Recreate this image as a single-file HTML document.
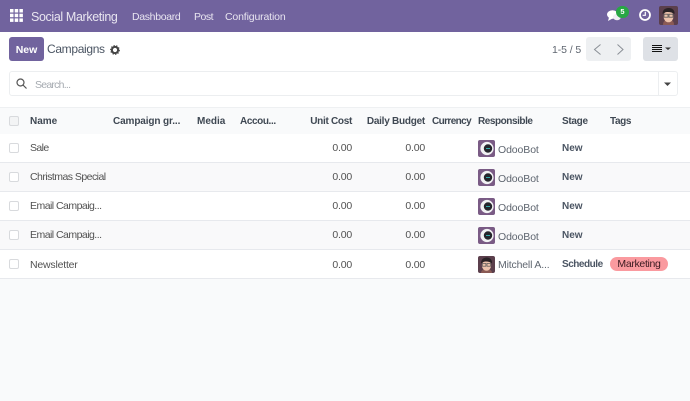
<!DOCTYPE html>
<html><head><meta charset="utf-8"><style>
html,body{margin:0;padding:0;background:#f9fafb}
body{width:690px;height:401px;overflow:hidden;position:relative;font-family:"Liberation Sans","Noto Sans CJK SC",sans-serif;font-size:10.5px;color:#525252}
#w{position:absolute;left:0;top:0;width:690px;height:401px;background:#f9fafb;overflow:hidden;filter:blur(.3px)}
.a{position:absolute;white-space:nowrap;line-height:14px}
.box{position:absolute;left:9px;width:10px;height:10px;box-sizing:border-box;border:1px solid #d8dadd;border-radius:2px;background:#fff}
.row{position:absolute;left:0;width:690px;height:28px;border-bottom:1px solid #e7e9ed;background:#fff}
.alt{background:#f9f9fa}
.h{font-weight:bold;color:#3f4853;font-size:10px}
.r{text-align:right}
.n{color:#e8e5f0}
.v{letter-spacing:-.2px}
.p{color:#5f6670;letter-spacing:-.1px}
.s{font-weight:bold;color:#4b5563;font-size:10px}
svg{position:absolute}
</style></head><body><div id="w">
<div class="a" style="left:0;top:0;width:690px;height:32px;background:#71639e"></div>
<svg style="left:10px;top:9px" width="13" height="13" fill="#fff"><rect x="0" y="0" width="3.5" height="3.5"/><rect x="4.7" y="0" width="3.5" height="3.5"/><rect x="9.4" y="0" width="3.5" height="3.5"/><rect x="0" y="4.7" width="3.5" height="3.5"/><rect x="4.7" y="4.7" width="3.5" height="3.5"/><rect x="9.4" y="4.7" width="3.5" height="3.5"/><rect x="0" y="9.4" width="3.5" height="3.5"/><rect x="4.7" y="9.4" width="3.5" height="3.5"/><rect x="9.4" y="9.4" width="3.5" height="3.5"/></svg>
<div class="a n" style="left:31px;top:10px;font-size:12.5px;letter-spacing:-.37px">Social Marketing</div>
<div class="a n" style="left:132px;top:10px;letter-spacing:-.33px">Dashboard</div>
<div class="a n" style="left:194px;top:10px;letter-spacing:-.5px">Post</div>
<div class="a n" style="left:225px;top:10px;letter-spacing:-.15px">Configuration</div>
<svg style="left:606px;top:9px" width="16" height="13"><ellipse cx="6.5" cy="5.5" rx="5.5" ry="4.3" fill="#fff"/><path d="M3 8.5L2 12L6.5 9.5Z" fill="#fff"/><ellipse cx="11" cy="8" rx="4" ry="3.2" fill="#f0eef5"/></svg>
<div class="a" style="left:616px;top:6px;width:13px;height:12px;border-radius:6.5px;background:#28a745;color:#fff;font-size:7.5px;font-weight:bold;line-height:12px;text-align:center">5</div>
<svg style="left:638px;top:8px" width="14" height="14"><circle cx="7" cy="7" r="5" fill="none" stroke="#fff" stroke-width="1.8"/><path d="M7.3 3.8V7.3H4.6" fill="none" stroke="#fff" stroke-width="1.2"/></svg>
<svg style="left:659px;top:6px" width="19" height="19"><rect width="19" height="19" rx="2" fill="#5b3f4c"/><path d="M4 19C4 15 6 14 9.5 14S15 15 15 19Z" fill="#8a5a55"/><ellipse cx="9.5" cy="10.5" rx="5" ry="5.8" fill="#edc3ac"/><path d="M3.5 8C3.5 3 7 2 10 2S16 4 15.5 8C13 6 8 5.5 6 6.5Z" fill="#2a2226"/><rect x="5" y="8.2" width="4" height="3" fill="none" stroke="#555" stroke-width=".8"/><rect x="10" y="8.2" width="4" height="3" fill="none" stroke="#555" stroke-width=".8"/></svg>

<div class="a" style="left:0;top:32px;width:690px;height:75px;background:#fff"></div>
<div class="a" style="left:9px;top:37px;width:35px;height:24px;border-radius:3px;background:#71639e;color:#fff;font-weight:bold;font-size:10.5px;line-height:27px;text-align:center">New</div>
<div class="a" style="left:47px;top:42px;font-size:12px;letter-spacing:-.33px;color:#4b5563">Campaigns</div>
<svg style="left:110px;top:45px" width="10" height="10"><circle cx="5" cy="5" r="3.1" fill="none" stroke="#444" stroke-width="2"/><circle cx="5" cy="5" r="4.2" fill="none" stroke="#444" stroke-width="1.4" stroke-dasharray="1.3 1.3"/></svg>
<div class="a" style="left:552px;top:43px;letter-spacing:-.1px;color:#5f6670">1-5 / 5</div>
<div class="a" style="left:586px;top:37px;width:22.5px;height:24px;background:#eef0f2;border-radius:3px 0 0 3px"></div>
<div class="a" style="left:609px;top:37px;width:22px;height:24px;background:#eef0f2;border-radius:0 3px 3px 0"></div>
<svg style="left:586px;top:38px" width="45" height="23" fill="none" stroke="#8a8f96" stroke-width="1"><path d="M14.5 6.5L8.5 11.5L14.5 16.5"/><path d="M31.5 6.5L37 11.5L31.5 16.5"/></svg>
<div class="a" style="left:643px;top:37px;width:35px;height:24px;background:#dee1e6;border-radius:3px"></div>
<svg style="left:652px;top:45px" width="20" height="9"><path d="M0 .5H10M0 2.5H10M0 4.5H10M0 6.5H10" stroke="#111" stroke-width="1"/><path d="M13 2.5H19L16 5Z" fill="#333"/></svg>

<div class="a" style="left:9px;top:71px;width:669px;height:25px;box-sizing:border-box;border:1px solid #eceef0;border-radius:3px;background:#fff"></div>
<div class="a" style="left:658px;top:72px;width:1px;height:23px;background:#eceef0"></div>
<svg style="left:16px;top:78px" width="11" height="11" fill="none" stroke="#555" stroke-width="1.2"><circle cx="4.5" cy="4.5" r="3.5"/><path d="M7 7L10.5 10.5"/></svg>
<div class="a" style="left:35px;top:78px;font-size:10.5px;letter-spacing:-.75px;color:#a5aab0">Search...</div>
<svg style="left:664px;top:82px" width="8" height="5"><path d="M0 .5H7L3.5 4Z" fill="#444"/></svg>

<div class="a" style="left:0;top:107px;width:690px;height:27px;background:#f9fafb;border-top:1px solid #eef0f2;box-sizing:border-box"></div>
<div class="box" style="top:116px;background:#f3f4f5"></div>
<div class="a h" style="left:30px;top:115px">Name</div>
<div class="a h" style="left:113px;top:115px;letter-spacing:-.12px">Campaign gr...</div>
<div class="a h" style="left:197px;top:115px">Media</div>
<div class="a h" style="left:240px;top:115px;letter-spacing:-.4px">Accou...</div>
<div class="a h r" style="left:290px;top:115px;width:62px;letter-spacing:-.3px">Unit Cost</div>
<div class="a h r" style="left:355px;top:115px;width:70px;letter-spacing:-.25px">Daily Budget</div>
<div class="a h" style="left:432px;top:115px;letter-spacing:-.6px">Currency</div>
<div class="a h" style="left:478px;top:115px;letter-spacing:-.45px">Responsible</div>
<div class="a h" style="left:562px;top:115px;letter-spacing:-.3px">Stage</div>
<div class="a h" style="left:610px;top:115px;letter-spacing:-.4px">Tags</div>

<div class="row" style="top:134px"></div>
<div class="row alt" style="top:163px"></div>
<div class="row" style="top:192px;height:28px"></div>
<div class="row alt" style="top:221px"></div>
<div class="row" style="top:250px"></div>

<div class="box" style="top:143px"></div>
<div class="box" style="top:172px"></div>
<div class="box" style="top:201px"></div>
<div class="box" style="top:230px"></div>
<div class="box" style="top:259px"></div>

<div class="a" style="left:30px;top:141px;letter-spacing:-.6px">Sale</div>
<div class="a" style="left:30px;top:170px;letter-spacing:-.53px">Christmas Special</div>
<div class="a" style="left:30px;top:199px;letter-spacing:-.53px">Email Campaig...</div>
<div class="a" style="left:30px;top:228px;letter-spacing:-.53px">Email Campaig...</div>
<div class="a" style="left:30px;top:258px;letter-spacing:-.2px">Newsletter</div>

<div class="a r v" style="left:300px;top:141px;width:52px">0.00</div>
<div class="a r v" style="left:300px;top:170px;width:52px">0.00</div>
<div class="a r v" style="left:300px;top:199px;width:52px">0.00</div>
<div class="a r v" style="left:300px;top:228px;width:52px">0.00</div>
<div class="a r v" style="left:300px;top:258px;width:52px">0.00</div>
<div class="a r v" style="left:373px;top:141px;width:52px">0.00</div>
<div class="a r v" style="left:373px;top:170px;width:52px">0.00</div>
<div class="a r v" style="left:373px;top:199px;width:52px">0.00</div>
<div class="a r v" style="left:373px;top:228px;width:52px">0.00</div>
<div class="a r v" style="left:373px;top:258px;width:52px">0.00</div>

<svg style="left:478px;top:140px" width="17" height="17"><rect width="17" height="17" rx="2" fill="#7a5b85"/><circle cx="9" cy="8.5" r="6.6" fill="#f2f2f4"/><circle cx="10" cy="8.5" r="4.2" fill="#26262c"/><rect x="8" y="8" width="4" height="1" fill="#3aa"/></svg>
<svg style="left:478px;top:169px" width="17" height="17"><rect width="17" height="17" rx="2" fill="#7a5b85"/><circle cx="9" cy="8.5" r="6.6" fill="#f2f2f4"/><circle cx="10" cy="8.5" r="4.2" fill="#26262c"/><rect x="8" y="8" width="4" height="1" fill="#3aa"/></svg>
<svg style="left:478px;top:198px" width="17" height="17"><rect width="17" height="17" rx="2" fill="#7a5b85"/><circle cx="9" cy="8.5" r="6.6" fill="#f2f2f4"/><circle cx="10" cy="8.5" r="4.2" fill="#26262c"/><rect x="8" y="8" width="4" height="1" fill="#3aa"/></svg>
<svg style="left:478px;top:227px" width="17" height="17"><rect width="17" height="17" rx="2" fill="#7a5b85"/><circle cx="9" cy="8.5" r="6.6" fill="#f2f2f4"/><circle cx="10" cy="8.5" r="4.2" fill="#26262c"/><rect x="8" y="8" width="4" height="1" fill="#3aa"/></svg>
<svg style="left:478px;top:256px" width="17" height="17"><rect width="17" height="17" rx="2" fill="#5b3f4c"/><path d="M3 17C3 14 6 13 8.5 13S14 14 14 17Z" fill="#8a5a55"/><ellipse cx="8.5" cy="9.5" rx="4.6" ry="5.3" fill="#edc3ac"/><path d="M3 7.5C3 2.5 6.5 1.5 9 1.5S14.5 3.5 14 7.5C12 5.5 7.5 5 5.5 6Z" fill="#2a2226"/><rect x="4.3" y="7.5" width="3.6" height="2.7" fill="none" stroke="#555" stroke-width=".7"/><rect x="9" y="7.5" width="3.6" height="2.7" fill="none" stroke="#555" stroke-width=".7"/></svg>

<div class="a p" style="left:498px;top:143px">OdooBot</div>
<div class="a p" style="left:498px;top:172px">OdooBot</div>
<div class="a p" style="left:498px;top:201px">OdooBot</div>
<div class="a p" style="left:498px;top:230px">OdooBot</div>
<div class="a p" style="left:498px;top:258px;letter-spacing:-.17px">Mitchell A...</div>

<div class="a s" style="left:562px;top:142px">New</div>
<div class="a s" style="left:562px;top:171px">New</div>
<div class="a s" style="left:562px;top:200px">New</div>
<div class="a s" style="left:562px;top:229px">New</div>
<div class="a s" style="left:562px;top:258px;letter-spacing:-.47px">Schedule</div>

<div class="a" style="left:610px;top:257px;width:58px;height:14px;border-radius:7px;background:#fa9a9f;color:#3a1a20;letter-spacing:-.33px;line-height:15px;text-align:center;overflow:hidden">Marketing</div>
</div></body></html>
